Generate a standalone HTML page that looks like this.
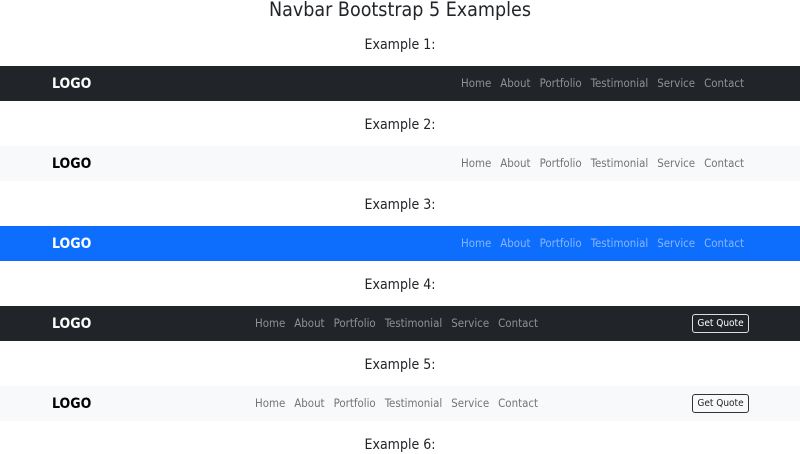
<!DOCTYPE html>
<html><head><meta charset="utf-8"><style>
*{margin:0;padding:0;box-sizing:border-box}
body{width:800px;height:450px;overflow:hidden;background:#fff;font-family:"DejaVu Sans Condensed","DejaVu Sans","Liberation Sans",sans-serif;color:#212529;position:relative}
.t{position:absolute;left:0;width:800px;text-align:center}
.h1{top:-2px;font-size:19.5px;line-height:24px}
.ex{font-size:14px;line-height:18px}
.nav{position:absolute;left:0;width:800px;height:35px}
.logo{position:absolute;left:52px;top:1px;line-height:35px;font-weight:bold;font-size:14px}
.links{position:absolute;top:0;line-height:35px;font-size:11.4px;display:flex;gap:9px;white-space:nowrap}
.r{right:56px}
.c{left:255px}
.dark{background:#212529}.dark .logo{color:#fff}.dark .links{color:#8f9194}
.light{background:#f8f9fa}.light .logo{color:#000}.light .links{color:#737475}
.blue{background:#0d6efd}.blue .logo{color:#fff}.blue .links{color:#88b6fe}
.btn{position:absolute;left:692px;top:8px;width:57px;height:19px;border:1px solid;border-radius:3px;font-size:10px;line-height:17px;text-align:center}
.dark .btn{border-color:#ddd;color:#fff}
.light .btn{border-color:#333;color:#222}
</style></head><body>
<div class="t h1">Navbar Bootstrap 5 Examples</div>
<div class="t ex" style="top:36px">Example 1:</div>
<div class="nav dark" style="top:66px"><div class="logo">LOGO</div><div class="links r"><span>Home</span><span>About</span><span>Portfolio</span><span>Testimonial</span><span>Service</span><span>Contact</span></div></div>
<div class="t ex" style="top:116px">Example 2:</div>
<div class="nav light" style="top:146px"><div class="logo">LOGO</div><div class="links r"><span>Home</span><span>About</span><span>Portfolio</span><span>Testimonial</span><span>Service</span><span>Contact</span></div></div>
<div class="t ex" style="top:196px">Example 3:</div>
<div class="nav blue" style="top:226px"><div class="logo">LOGO</div><div class="links r"><span>Home</span><span>About</span><span>Portfolio</span><span>Testimonial</span><span>Service</span><span>Contact</span></div></div>
<div class="t ex" style="top:276px">Example 4:</div>
<div class="nav dark" style="top:306px"><div class="logo">LOGO</div><div class="links c"><span>Home</span><span>About</span><span>Portfolio</span><span>Testimonial</span><span>Service</span><span>Contact</span></div><div class="btn">Get Quote</div></div>
<div class="t ex" style="top:356px">Example 5:</div>
<div class="nav light" style="top:386px"><div class="logo">LOGO</div><div class="links c"><span>Home</span><span>About</span><span>Portfolio</span><span>Testimonial</span><span>Service</span><span>Contact</span></div><div class="btn">Get Quote</div></div>
<div class="t ex" style="top:436px">Example 6:</div>
</body></html>
